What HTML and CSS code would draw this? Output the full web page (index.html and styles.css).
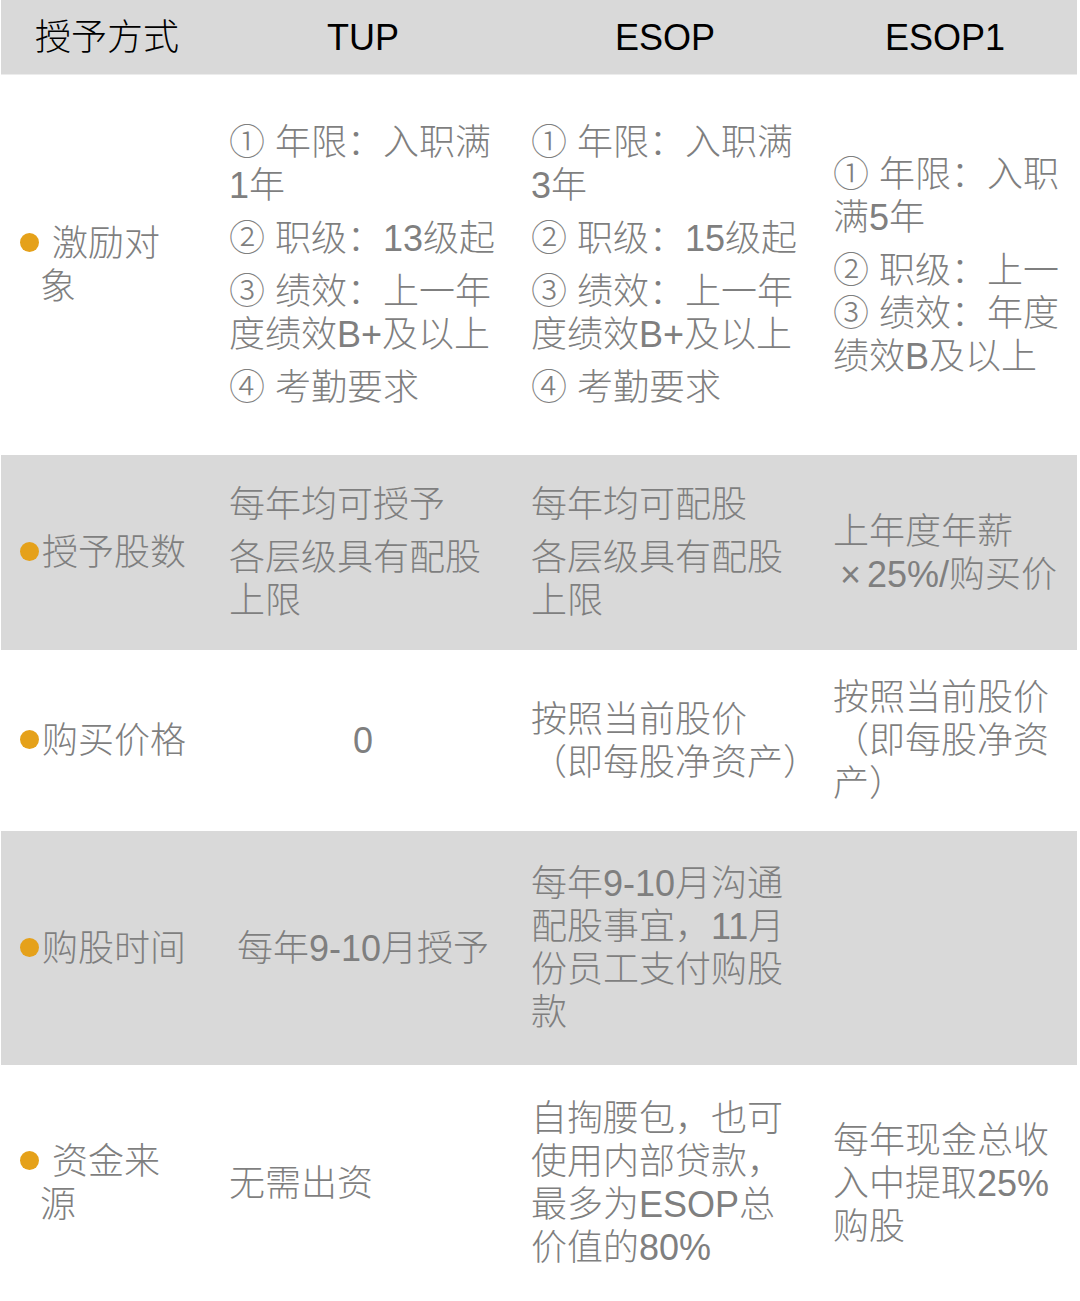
FILE: index.html
```html
<!DOCTYPE html>
<html lang="zh-CN">
<head>
<meta charset="utf-8">
<title>授予方式对比</title>
<link rel="stylesheet" href="styles.css">
</head>
<body>
<div class="sheet">
  <div class="row row-head shade">
    <div class="cell head-label"><p>授予方式</p></div>
    <div class="cell center"><p>TUP</p></div>
    <div class="cell center"><p>ESOP</p></div>
    <div class="cell narrow center"><p>ESOP1</p></div>
  </div>

  <div class="row row-target">
    <div class="cell label"><p><span class="dot"></span> 激励对<br>象</p></div>
    <div class="cell">
      <p>① 年限：入职满<br>1年</p>
      <p>② 职级：13级起</p>
      <p>③ 绩效：上一年<br>度绩效B+及以上</p>
      <p>④ 考勤要求</p>
    </div>
    <div class="cell">
      <p>① 年限：入职满<br>3年</p>
      <p>② 职级：15级起</p>
      <p>③ 绩效：上一年<br>度绩效B+及以上</p>
      <p>④ 考勤要求</p>
    </div>
    <div class="cell narrow">
      <p>① 年限：入职<br>满5年</p>
      <p>② 职级：上一<br>③ 绩效：年度<br>绩效B及以上</p>
    </div>
  </div>

  <div class="row row-shares shade">
    <div class="cell label"><p><span class="dot"></span>授予股数</p></div>
    <div class="cell">
      <p>每年均可授予</p>
      <p>各层级具有配股<br>上限</p>
    </div>
    <div class="cell">
      <p>每年均可配股</p>
      <p>各层级具有配股<br>上限</p>
    </div>
    <div class="cell narrow">
      <p>上年度年薪<br><span class="sign">×</span>25%/购买价</p>
    </div>
  </div>

  <div class="row row-price">
    <div class="cell label"><p><span class="dot"></span>购买价格</p></div>
    <div class="cell center"><p>0</p></div>
    <div class="cell">
      <p>按照当前股价<br>（即每股净资产）</p>
    </div>
    <div class="cell narrow">
      <p>按照当前股价<br>（即每股净资<br>产）</p>
    </div>
  </div>

  <div class="row row-time shade">
    <div class="cell label"><p><span class="dot"></span>购股时间</p></div>
    <div class="cell center"><p>每年9-10月授予</p></div>
    <div class="cell">
      <p>每年9-10月沟通<br>配股事宜，11月<br>份员工支付购股<br>款</p>
    </div>
    <div class="cell narrow"></div>
  </div>

  <div class="row row-fund">
    <div class="cell label"><p><span class="dot"></span> 资金来<br>源</p></div>
    <div class="cell"><p>无需出资</p></div>
    <div class="cell">
      <p>自掏腰包，也可<br>使用内部贷款，<br>最多为ESOP总<br>价值的80%</p>
    </div>
    <div class="cell narrow">
      <p>每年现金总收<br>入中提取25%<br>购股</p>
    </div>
  </div>
</div>
</body>
</html>
```

FILE: styles.css
```css
html, body {
  margin: 0;
  padding: 0;
  background: #ffffff;
}

body {
  font-family: "Liberation Sans", "Noto Sans CJK SC", sans-serif;
  font-size: 36px;
  font-weight: 300;
  line-height: 43px;
  color: #7f7f7f;
}

.sheet {
  margin-left: 1px;
  width: 1076px;
}

.row {
  display: grid;
  grid-template-columns: 219px 302px 302px 253px;
  box-sizing: border-box;
}

.shade {
  background: #d9d9d9;
}

.row-head {
  height: 75px;
  border-bottom: 1px solid #ececec;
  color: #000000;
}

.row-target { height: 380px; }
.row-shares { height: 195px; }
.row-price  { height: 181px; }
.row-time   { height: 234px; }
.row-fund   { height: 236px; }

.cell {
  display: flex;
  flex-direction: column;
  justify-content: center;
  padding: 0 25px 0 9px;
  white-space: nowrap;
}

.cell.narrow {
  padding: 0 20px 0 9px;
}

.cell p {
  margin: 0;
}

.cell p + p {
  margin-top: 10px;
}

.center {
  text-align: center;
}

.head-label {
  padding: 0 0 0 34px;
}

.label {
  padding: 0 0 0 39px;
}

.label p {
  text-indent: -20px;
}

.sign {
  margin: 0 6px 0 7px;
}

.dot {
  display: inline-block;
  width: 19px;
  height: 19px;
  margin-right: 3px;
  border-radius: 50%;
  background: #e5a11a;
  vertical-align: 4px;
  text-indent: 0;
}
```
